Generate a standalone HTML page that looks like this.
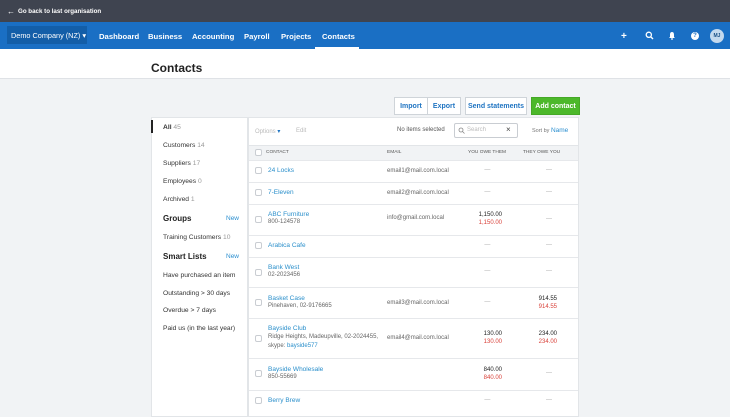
<!DOCTYPE html>
<html><head><meta charset="utf-8">
<style>
*{margin:0;padding:0;box-sizing:border-box}
body{width:730px;height:411px;overflow:hidden;background:#f1f3f5;font-family:"Liberation Sans",Arial,sans-serif;position:relative;color:#222}
.a{position:absolute;white-space:nowrap}
.top{left:0;top:0;width:730px;height:22px;background:#3f4450}
.nav{left:0;top:22px;width:730px;height:27px;background:#1a6fc4}
.hdr{left:0;top:49px;width:730px;height:30px;background:#fff;border-bottom:1px solid #dfe2e6}
.nv{color:#fff;font-size:7.7px;font-weight:bold;top:32px}
.btn{top:97px;height:18px;background:#fff;border:1px solid #cfd4d9;color:#1f74c2;font-size:7px;font-weight:bold;text-align:center;display:flex;align-items:center;justify-content:center}
.side{left:151px;top:117px;width:97px;height:300px;background:#fff;border:1px solid #e2e5e8}
.tbl{left:248px;top:117px;width:331px;height:300px;background:#fff;border:1px solid #e2e5e8;border-left:1px solid #e2e5e8}
.s{font-size:6.7px;color:#333;left:163px}
.s i{font-style:normal;color:#999}
.sh{font-size:8px;font-weight:bold;left:163px}
.new{font-size:6.5px;color:#2b8fd0;left:226px}
.row{left:249px;width:329px;border-top:1px solid #e6e8eb}
.cb{left:255px;width:7px;height:7px;border:1px solid #c9cdd2;border-radius:2px;background:#fff}
.nm{left:268px;font-size:6.5px;color:#2a8fcb}
.sub{left:268px;font-size:6px;color:#666}
.em{left:387px;font-size:6px;color:#666}
.c1{left:460px;width:42px;text-align:right;font-size:6px;color:#222}
.c2{left:515px;width:42px;text-align:right;font-size:6px;color:#222}
.r{color:#d9423a}
.d{font-size:6px;color:#aaa}
</style></head><body>
<div class="a top"></div>
<div class="a" style="left:7px;top:7px;color:#fff;font-size:8px;font-weight:bold">←</div>
<div class="a" style="left:18px;top:8px;color:#fff;font-size:6.2px;font-weight:bold">Go back to last organisation</div>
<div class="a nav"></div>
<div class="a" style="left:7px;top:26px;width:80px;height:18px;background:#135ea8"></div>
<div class="a" style="left:11px;top:31px;color:#fff;font-size:7.3px">Demo Company (NZ) ▾</div>
<div class="a nv" style="left:99px">Dashboard</div>
<div class="a nv" style="left:148px">Business</div>
<div class="a nv" style="left:192px">Accounting</div>
<div class="a nv" style="left:244px">Payroll</div>
<div class="a nv" style="left:281px">Projects</div>
<div class="a nv" style="left:322px">Contacts</div>
<div class="a" style="left:315px;top:47px;width:44px;height:2px;background:#fff"></div>
<div class="a" style="left:621px;top:31px;color:#fff;font-size:10px;font-weight:bold">+</div>
<svg class="a" style="left:645px;top:31px" width="9" height="9" viewBox="0 0 9 9"><circle cx="3.8" cy="3.8" r="2.6" fill="none" stroke="#fff" stroke-width="1.3"/><path d="M5.7 5.7L8 8" stroke="#fff" stroke-width="1.4"/></svg>
<svg class="a" style="left:668px;top:31px" width="8" height="9" viewBox="0 0 8 9"><path d="M4 1C2.3 1 2 2.5 2 4V6L1 7H7L6 6V4C6 2.5 5.7 1 4 1Z" fill="#fff"/><circle cx="4" cy="8" r="0.9" fill="#fff"/></svg>
<div class="a" style="left:691px;top:32px;width:8px;height:8px;border-radius:50%;background:#fff;color:#1a6fc4;font-size:6px;font-weight:bold;text-align:center;line-height:8px">?</div>
<div class="a" style="left:710px;top:29px;width:14px;height:14px;border-radius:50%;background:#c4d9ee;color:#1a4f85;font-size:5px;font-weight:bold;text-align:center;line-height:14px">MJ</div>
<div class="a hdr"></div>
<div class="a" style="left:151px;top:61px;font-size:12px;font-weight:bold;color:#222">Contacts</div>

<div class="a btn" style="left:394px;width:34px">Import</div>
<div class="a btn" style="left:427px;width:34px">Export</div>
<div class="a btn" style="left:465px;width:62px">Send statements</div>
<div class="a btn" style="left:531px;width:49px;background:#4cb82a;border-color:#45a826;color:#fff">Add contact</div>

<div class="a side"></div>
<div class="a" style="left:151px;top:120px;width:2px;height:13px;background:#222"></div>
<div class="a s" style="top:124px;font-weight:bold">All <i style="font-weight:normal">45</i></div>
<div class="a s" style="top:142px">Customers <i>14</i></div>
<div class="a s" style="top:160px">Suppliers <i>17</i></div>
<div class="a s" style="top:178px">Employees <i>0</i></div>
<div class="a s" style="top:196px">Archived <i>1</i></div>
<div class="a sh" style="top:214px">Groups</div><div class="a new" style="top:215px">New</div>
<div class="a s" style="top:234px">Training Customers <i>10</i></div>
<div class="a sh" style="top:252px">Smart Lists</div><div class="a new" style="top:253px">New</div>
<div class="a s" style="top:272px">Have purchased an item</div>
<div class="a s" style="top:290px">Outstanding &gt; 30 days</div>
<div class="a s" style="top:307px">Overdue &gt; 7 days</div>
<div class="a s" style="top:325px">Paid us (in the last year)</div>

<div class="a tbl"></div>
<div class="a" style="left:255px;top:128px;font-size:6px;color:#bbb">Options <span style="color:#1f74c2">▾</span></div>
<div class="a" style="left:296px;top:128px;font-size:6px;color:#bbb">Edit</div>
<div class="a" style="left:397px;top:127px;font-size:6px;color:#555">No items selected</div>
<div class="a" style="left:454px;top:123px;width:64px;height:15px;border:1px solid #c9cdd2;border-radius:2px;background:#fff"></div>
<svg class="a" style="left:458px;top:127px" width="7" height="7" viewBox="0 0 7 7"><circle cx="3" cy="3" r="2" fill="none" stroke="#888" stroke-width="0.8"/><path d="M4.5 4.5L6.5 6.5" stroke="#888" stroke-width="0.8"/></svg>
<div class="a" style="left:467px;top:127px;font-size:6px;color:#bbb">Search</div>
<div class="a" style="left:506px;top:125px;font-size:8px;color:#444">×</div>
<div class="a" style="left:532px;top:127px;font-size:5.5px;color:#777">Sort by <span style="color:#2b8fd0;font-size:6.5px">Name</span></div>

<div class="a" style="left:249px;top:145px;width:329px;height:15px;background:#f1f3f5;border-top:1px solid #e2e5e8"></div>
<div class="a cb" style="top:149px"></div>
<div class="a" style="left:266px;top:150px;font-size:4.8px;color:#555">CONTACT</div>
<div class="a" style="left:387px;top:150px;font-size:4.8px;color:#555">EMAIL</div>
<div class="a" style="left:468px;top:150px;font-size:4.8px;color:#555">YOU OWE THEM</div>
<div class="a" style="left:523px;top:150px;font-size:4.8px;color:#555">THEY OWE YOU</div>

<div class="a row" style="top:160px;height:22px"></div>
<div class="a cb" style="top:167px"></div><div class="a nm" style="top:167px">24 Locks</div><div class="a em" style="top:168px">email1@mail.com.local</div><div class="a c1 d" style="top:167px">—&nbsp;&nbsp;&nbsp;&nbsp;&nbsp;&nbsp;&nbsp;</div><div class="a c2 d" style="top:167px">—&nbsp;&nbsp;&nbsp;</div>

<div class="a row" style="top:182px;height:22px"></div>
<div class="a cb" style="top:189px"></div><div class="a nm" style="top:189px">7-Eleven</div><div class="a em" style="top:190px">email2@mail.com.local</div><div class="a c1 d" style="top:189px">—&nbsp;&nbsp;&nbsp;&nbsp;&nbsp;&nbsp;&nbsp;</div><div class="a c2 d" style="top:189px">—&nbsp;&nbsp;&nbsp;</div>

<div class="a row" style="top:204px;height:31px"></div>
<div class="a cb" style="top:216px"></div><div class="a nm" style="top:211px">ABC Furniture</div><div class="a sub" style="top:219px">800-124578</div><div class="a em" style="top:215px">info@gmail.com.local</div><div class="a c1" style="top:212px">1,150.00</div><div class="a c1 r" style="top:220px">1,150.00</div><div class="a c2 d" style="top:216px">—&nbsp;&nbsp;&nbsp;</div>

<div class="a row" style="top:235px;height:22px"></div>
<div class="a cb" style="top:242px"></div><div class="a nm" style="top:242px">Arabica Cafe</div><div class="a c1 d" style="top:242px">—&nbsp;&nbsp;&nbsp;&nbsp;&nbsp;&nbsp;&nbsp;</div><div class="a c2 d" style="top:242px">—&nbsp;&nbsp;&nbsp;</div>

<div class="a row" style="top:257px;height:30px"></div>
<div class="a cb" style="top:269px"></div><div class="a nm" style="top:264px">Bank West</div><div class="a sub" style="top:272px">02-2023456</div><div class="a c1 d" style="top:268px">—&nbsp;&nbsp;&nbsp;&nbsp;&nbsp;&nbsp;&nbsp;</div><div class="a c2 d" style="top:268px">—&nbsp;&nbsp;&nbsp;</div>

<div class="a row" style="top:287px;height:31px"></div>
<div class="a cb" style="top:299px"></div><div class="a nm" style="top:295px">Basket Case</div><div class="a sub" style="top:303px">Pinehaven, 02-9176665</div><div class="a em" style="top:300px">email3@mail.com.local</div><div class="a c1 d" style="top:299px">—&nbsp;&nbsp;&nbsp;&nbsp;&nbsp;&nbsp;&nbsp;</div><div class="a c2" style="top:296px">914.55</div><div class="a c2 r" style="top:304px">914.55</div>

<div class="a row" style="top:318px;height:40px"></div>
<div class="a cb" style="top:335px"></div><div class="a nm" style="top:325px">Bayside Club</div><div class="a sub" style="top:334px">Ridge Heights, Madeupville, 02-2024455,</div><div class="a sub" style="top:343px">skype: <span style="color:#2a8fcb">bayside577</span></div><div class="a em" style="top:335px">email4@mail.com.local</div><div class="a c1" style="top:331px">130.00</div><div class="a c1 r" style="top:339px">130.00</div><div class="a c2" style="top:331px">234.00</div><div class="a c2 r" style="top:339px">234.00</div>

<div class="a row" style="top:358px;height:32px"></div>
<div class="a cb" style="top:370px"></div><div class="a nm" style="top:366px">Bayside Wholesale</div><div class="a sub" style="top:374px">850-55669</div><div class="a c1" style="top:367px">840.00</div><div class="a c1 r" style="top:375px">840.00</div><div class="a c2 d" style="top:370px">—&nbsp;&nbsp;&nbsp;</div>

<div class="a row" style="top:390px;height:22px"></div>
<div class="a cb" style="top:397px"></div><div class="a nm" style="top:397px">Berry Brew</div><div class="a c1 d" style="top:397px">—&nbsp;&nbsp;&nbsp;&nbsp;&nbsp;&nbsp;&nbsp;</div><div class="a c2 d" style="top:397px">—&nbsp;&nbsp;&nbsp;</div>
</body></html>
